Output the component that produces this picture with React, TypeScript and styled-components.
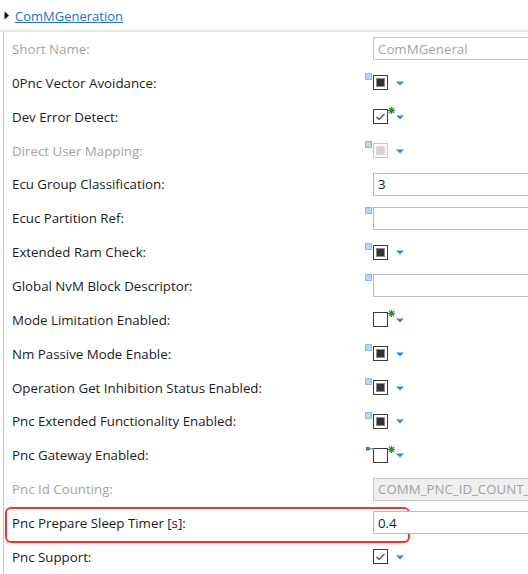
import React from 'react';
import styled, { createGlobalStyle } from 'styled-components';

//global
const GlobalStyle = createGlobalStyle`
  html, body {
    margin: 0;
    padding: 0;
    background: #ffffff;
  }
  body {
    font-family: "Open Sans", "Noto Sans", "Liberation Sans", sans-serif;
    font-size: 13.3px;
    color: #1b1b1b;
    overflow: hidden;
  }
`;

//styled
const Page = styled.div`
  width: 528px;
  height: 574px;
  overflow: hidden;
  display: flex;
  flex-direction: column;
`;

const Header = styled.div`
  height: 30px;
  display: flex;
  align-items: center;
  gap: 5px;
  padding-left: 4px;
  border-bottom: 2px solid #e8e8e8;
  box-sizing: content-box;
`;

const SectionLink = styled.a`
  color: #1e6fc8;
  text-decoration: underline;
  font-size: 13px;
  margin-top: 2px;
  cursor: pointer;
`;

const Panel = styled.div`
  margin-left: 3px;
  border-left: 1px solid #c9c9c9;
  display: flex;
  flex-direction: column;
  flex: 1;
`;

const Row = styled.div`
  position: relative;
  height: 33.87px;
  display: grid;
  grid-template-columns: 361px 1fr;
  align-items: center;
  padding-left: 8px;
`;

const Highlight = styled.div`
  position: absolute;
  left: 1px;
  top: 1px;
  width: 401px;
  height: 32px;
  border: 2px solid #e5393b;
  border-radius: 6px;
  box-shadow: 0 1px 3px rgba(0, 0, 0, 0.18);
  pointer-events: none;
`;

const Label = styled.span<{ $disabled?: boolean }>`
  color: ${(p) => (p.$disabled ? '#a3a3a3' : '#1b1b1b')};
  white-space: nowrap;
`;

const Control = styled.div`
  position: relative;
  display: flex;
  align-items: center;
  gap: 8px;
  min-width: 0;
`;

const TextBox = styled.div<{ $variant?: 'normal' | 'readonly' | 'locked' }>`
  box-sizing: border-box;
  height: 23px;
  width: 220px;
  flex-shrink: 0;
  display: flex;
  align-items: center;
  padding-left: 4px;
  white-space: nowrap;
  overflow: hidden;
  border: 1px solid ${(p) => (p.$variant === 'normal' ? '#b9b9b9' : '#c6c6c6')};
  background: ${(p) => (p.$variant === 'locked' ? '#efefef' : '#ffffff')};
  color: ${(p) => (p.$variant === 'normal' ? '#1b1b1b' : '#a3a3a3')};
`;

const Box = styled.svg`
  display: block;
  flex-shrink: 0;
`;

const Marker = styled.svg<{ $top: number }>`
  position: absolute;
  left: -8px;
  top: ${(p) => p.$top}px;
`;

const LinkMarker = styled.svg`
  position: absolute;
  left: -8px;
  top: -1px;
`;

const Asterisk = styled.svg`
  position: absolute;
  left: 15px;
  top: -2px;
`;

const DropArrow = styled.svg`
  display: block;
  flex-shrink: 0;
  margin-top: 1px;
`;

//icons
const Caret = () => (
  <svg width="6" height="9" viewBox="0 0 6 9">
    <polygon points="0.5,0.5 5,4.5 0.5,8.5" fill="#111" />
  </svg>
);

type CheckState = 'filled' | 'checked' | 'empty' | 'disabled';

const CheckBox: React.FC<{ state: CheckState }> = ({ state }) => {
  const frame = state === 'disabled' ? '#c8c8c8' : '#3d3d3d';
  return (
    <Box width="15" height="15" viewBox="0 0 15 15">
      <rect x="0.5" y="0.5" width="14" height="14" fill="#fff" stroke={frame} />
      {state === 'filled' && (
        <rect x="3.5" y="3.5" width="8" height="8" fill="#333" stroke="#8c8c8c" />
      )}
      {state === 'disabled' && (
        <rect x="3.5" y="3.5" width="8" height="8" fill="#d3d3d3" stroke="#dcdcdc" />
      )}
      {state === 'checked' && (
        <polyline points="3.5,8 6,10.5 11.5,5" fill="none" stroke="#555" strokeWidth="1.4" />
      )}
    </Box>
  );
};

const DottedMarker: React.FC<{ top: number }> = ({ top }) => (
  <Marker $top={top} width="7" height="7" viewBox="0 0 7 7">
    <rect x="0.5" y="0.5" width="6" height="6" fill="#bcd5f5" stroke="#3f7fd6" strokeDasharray="1 1" />
  </Marker>
);

const ConnectMarker = () => (
  <LinkMarker width="9" height="5" viewBox="0 0 9 5">
    <rect x="1" y="0" width="3.5" height="3.5" fill="#4d6fb8" />
    <line x1="4" y1="1.8" x2="9" y2="1.8" stroke="#4d6fb8" strokeWidth="1" />
  </LinkMarker>
);

const GreenStar = () => (
  <Asterisk width="7" height="7" viewBox="0 0 7 7">
    <g stroke="#2b8a2b" strokeWidth="1.2">
      <line x1="3.5" y1="0" x2="3.5" y2="7" />
      <line x1="0" y1="3.5" x2="7" y2="3.5" />
      <line x1="1" y1="1" x2="6" y2="6" />
      <line x1="6" y1="1" x2="1" y2="6" />
    </g>
  </Asterisk>
);

const Arrow = () => (
  <DropArrow width="8" height="5" viewBox="0 0 8 5">
    <polygon points="0,0.5 8,0.5 4,4.5" fill="#2f8ae8" />
  </DropArrow>
);

//data
type Field =
  | { kind: 'text'; value: string; variant: 'normal' | 'readonly' | 'locked' }
  | { kind: 'check'; state: CheckState; star?: boolean };

interface Item {
  label: string;
  disabled?: boolean;
  marker?: 'dotted' | 'link';
  highlight?: boolean;
  field: Field;
}

const items: Item[] = [
  { label: 'Short Name:', disabled: true, field: { kind: 'text', value: 'ComMGeneral', variant: 'readonly' } },
  { label: '0Pnc Vector Avoidance:', marker: 'dotted', field: { kind: 'check', state: 'filled' } },
  { label: 'Dev Error Detect:', field: { kind: 'check', state: 'checked', star: true } },
  { label: 'Direct User Mapping:', disabled: true, marker: 'dotted', field: { kind: 'check', state: 'disabled' } },
  { label: 'Ecu Group Classification:', field: { kind: 'text', value: '3', variant: 'normal' } },
  { label: 'Ecuc Partition Ref:', marker: 'dotted', field: { kind: 'text', value: '', variant: 'normal' } },
  { label: 'Extended Ram Check:', marker: 'dotted', field: { kind: 'check', state: 'filled' } },
  { label: 'Global NvM Block Descriptor:', marker: 'dotted', field: { kind: 'text', value: '', variant: 'normal' } },
  { label: 'Mode Limitation Enabled:', field: { kind: 'check', state: 'empty', star: true } },
  { label: 'Nm Passive Mode Enable:', marker: 'dotted', field: { kind: 'check', state: 'filled' } },
  { label: 'Operation Get Inhibition Status Enabled:', marker: 'dotted', field: { kind: 'check', state: 'filled' } },
  { label: 'Pnc Extended Functionality Enabled:', marker: 'dotted', field: { kind: 'check', state: 'filled' } },
  { label: 'Pnc Gateway Enabled:', marker: 'link', field: { kind: 'check', state: 'empty', star: true } },
  { label: 'Pnc Id Counting:', disabled: true, field: { kind: 'text', value: 'COMM_PNC_ID_COUNT_RESERVED', variant: 'locked' } },
  { label: 'Pnc Prepare Sleep Timer [s]:', highlight: true, field: { kind: 'text', value: '0.4', variant: 'normal' } },
  { label: 'Pnc Support:', field: { kind: 'check', state: 'checked' } },
];

const App: React.FC = () => {
  return (
    <Page>
      <GlobalStyle />
      <Header>
        <Caret />
        <SectionLink>ComMGeneration</SectionLink>
      </Header>
      <Panel>
        {items.map((item) => (
          <Row key={item.label}>
            {item.highlight && <Highlight />}
            <Label $disabled={item.disabled}>{item.label}</Label>
            <Control>
              {item.marker === 'dotted' && (
                <DottedMarker top={item.field.kind === 'text' ? 0 : -2} />
              )}
              {item.marker === 'link' && <ConnectMarker />}
              {item.field.kind === 'text' ? (
                <TextBox $variant={item.field.variant}>{item.field.value}</TextBox>
              ) : (
                <>
                  <CheckBox state={item.field.state} />
                  {item.field.star && <GreenStar />}
                  <Arrow />
                </>
              )}
            </Control>
          </Row>
        ))}
      </Panel>
    </Page>
  );
};

export default App;
